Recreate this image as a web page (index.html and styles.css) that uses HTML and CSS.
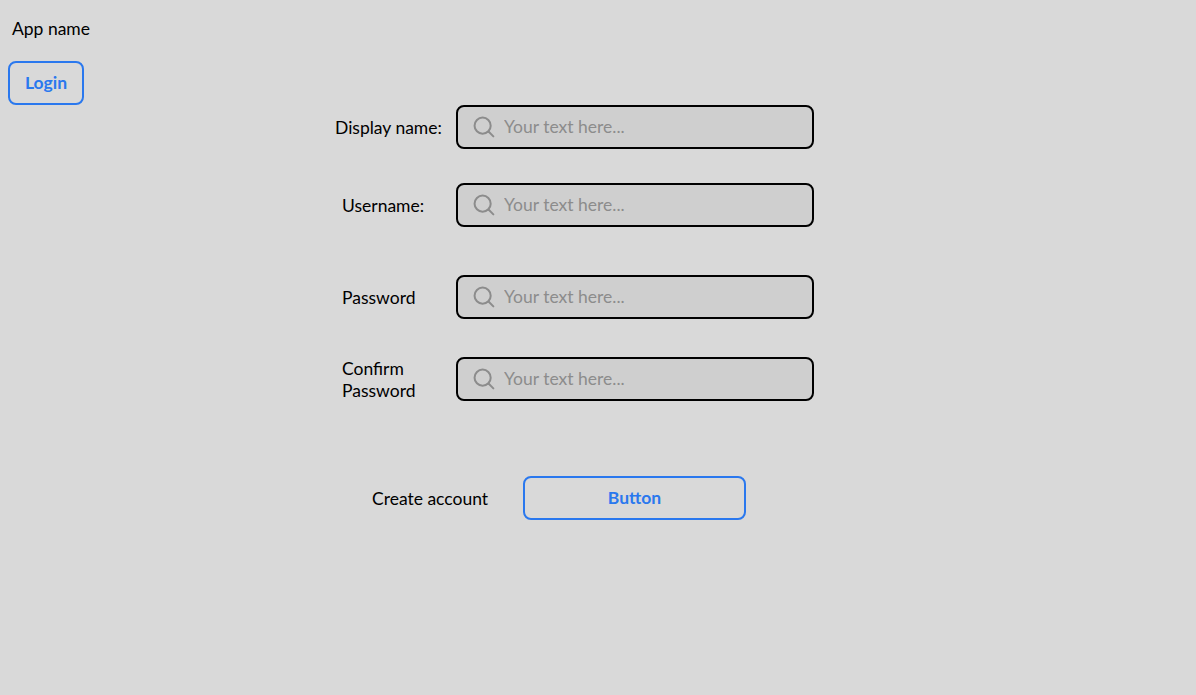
FILE: index.html
```html
<!DOCTYPE html>
<html lang="en">

<head>
    <meta charset="UTF-8" />
    <meta name="viewport" content="width=device-width, initial-scale=1.0" />
    <title>Create account</title>
    <link rel="stylesheet" href="styles.css">
</head>

<body>
    <header class="top">
        <p class="app-name">App name</p>
        <button class="btn btn-login" type="button">Login</button>
    </header>

    <form class="signup">
        <div class="row row-display">
            <label class="label label-wide" for="display_name">Display name:</label>
            <div class="search-field">
                <svg class="search-icon" viewBox="0 0 24 24" aria-hidden="true">
                    <circle cx="10.5" cy="10.5" r="8.8" />
                    <path d="M17.2 17.2l5 5" />
                </svg>
                <input id="display_name" type="text" placeholder="Your text here..." />
            </div>
        </div>

        <div class="row row-username">
            <label class="label" for="username">Username:</label>
            <div class="search-field">
                <svg class="search-icon" viewBox="0 0 24 24" aria-hidden="true">
                    <circle cx="10.5" cy="10.5" r="8.8" />
                    <path d="M17.2 17.2l5 5" />
                </svg>
                <input id="username" type="text" placeholder="Your text here..." />
            </div>
        </div>

        <div class="row row-password">
            <label class="label" for="password">Password</label>
            <div class="search-field">
                <svg class="search-icon" viewBox="0 0 24 24" aria-hidden="true">
                    <circle cx="10.5" cy="10.5" r="8.8" />
                    <path d="M17.2 17.2l5 5" />
                </svg>
                <input id="password" type="text" placeholder="Your text here..." />
            </div>
        </div>

        <div class="row row-confirm">
            <label class="label" for="confirm_password">Confirm<br>Password</label>
            <div class="search-field">
                <svg class="search-icon" viewBox="0 0 24 24" aria-hidden="true">
                    <circle cx="10.5" cy="10.5" r="8.8" />
                    <path d="M17.2 17.2l5 5" />
                </svg>
                <input id="confirm_password" type="text" placeholder="Your text here..." />
            </div>
        </div>

        <div class="row row-submit">
            <span class="submit-label">Create account</span>
            <button class="btn btn-submit" type="submit">Button</button>
        </div>
    </form>
</body>

</html>
```

FILE: styles.css
```css
:root {
    --bg-color: #d9d9d9;
    --field-bg: #cfcfcf;
    --text-color: #000;
    --primary: #2a78ee;
    --muted: #8c8c8c;
}

* {
    box-sizing: border-box;
}

body {
    font-family: 'Lato', sans-serif;
    font-size: 17.5px;
    background: var(--bg-color);
    color: var(--text-color);
    margin: 0;
}

.top {
    padding: 19px 0 0 8px;
}

.app-name {
    margin: 0 0 21px 4px;
    line-height: 20px;
    padding-bottom: 1px;
}

.btn {
    display: block;
    height: 44px;
    background: transparent;
    color: var(--primary);
    font-family: inherit;
    font-size: 17.5px;
    font-weight: 700;
    border: 2px solid var(--primary);
    border-radius: 8px;
    cursor: pointer;
}

.btn-login {
    width: 76px;
    padding: 0 0 1px;
}

.signup {
    padding-left: 335px;
}

.row {
    display: flex;
    align-items: center;
    height: 44px;
}

.row-username {
    margin-top: 34px;
}

.row-password {
    margin-top: 48px;
}

.row-confirm {
    margin-top: 38px;
}

.row-submit {
    margin-top: 75px;
    padding-left: 37px;
}

.label {
    width: 121px;
    padding: 2px 0 0 7px;
    line-height: 22px;
}

.label-wide {
    padding-left: 0;
}

.search-field {
    display: flex;
    align-items: center;
    gap: 9px;
    width: 358px;
    height: 44px;
    padding-left: 15px;
    background: var(--field-bg);
    border: 2px solid #000;
    border-radius: 8px;
}

.search-icon {
    width: 22px;
    height: 22px;
    flex: none;
    fill: none;
    stroke: var(--muted);
    stroke-width: 2.2;
    stroke-linecap: round;
}

.search-field input {
    flex: 1;
    min-width: 0;
    height: 100%;
    padding: 0 0 2px;
    background: none;
    border: none;
    outline: none;
    font-family: inherit;
    font-size: 17.5px;
    color: var(--text-color);
}

.search-field input::placeholder {
    color: var(--muted);
    opacity: 1;
}

.submit-label {
    width: 151px;
}

.btn-submit {
    width: 223px;
    padding: 0 0 1px;
}
```
